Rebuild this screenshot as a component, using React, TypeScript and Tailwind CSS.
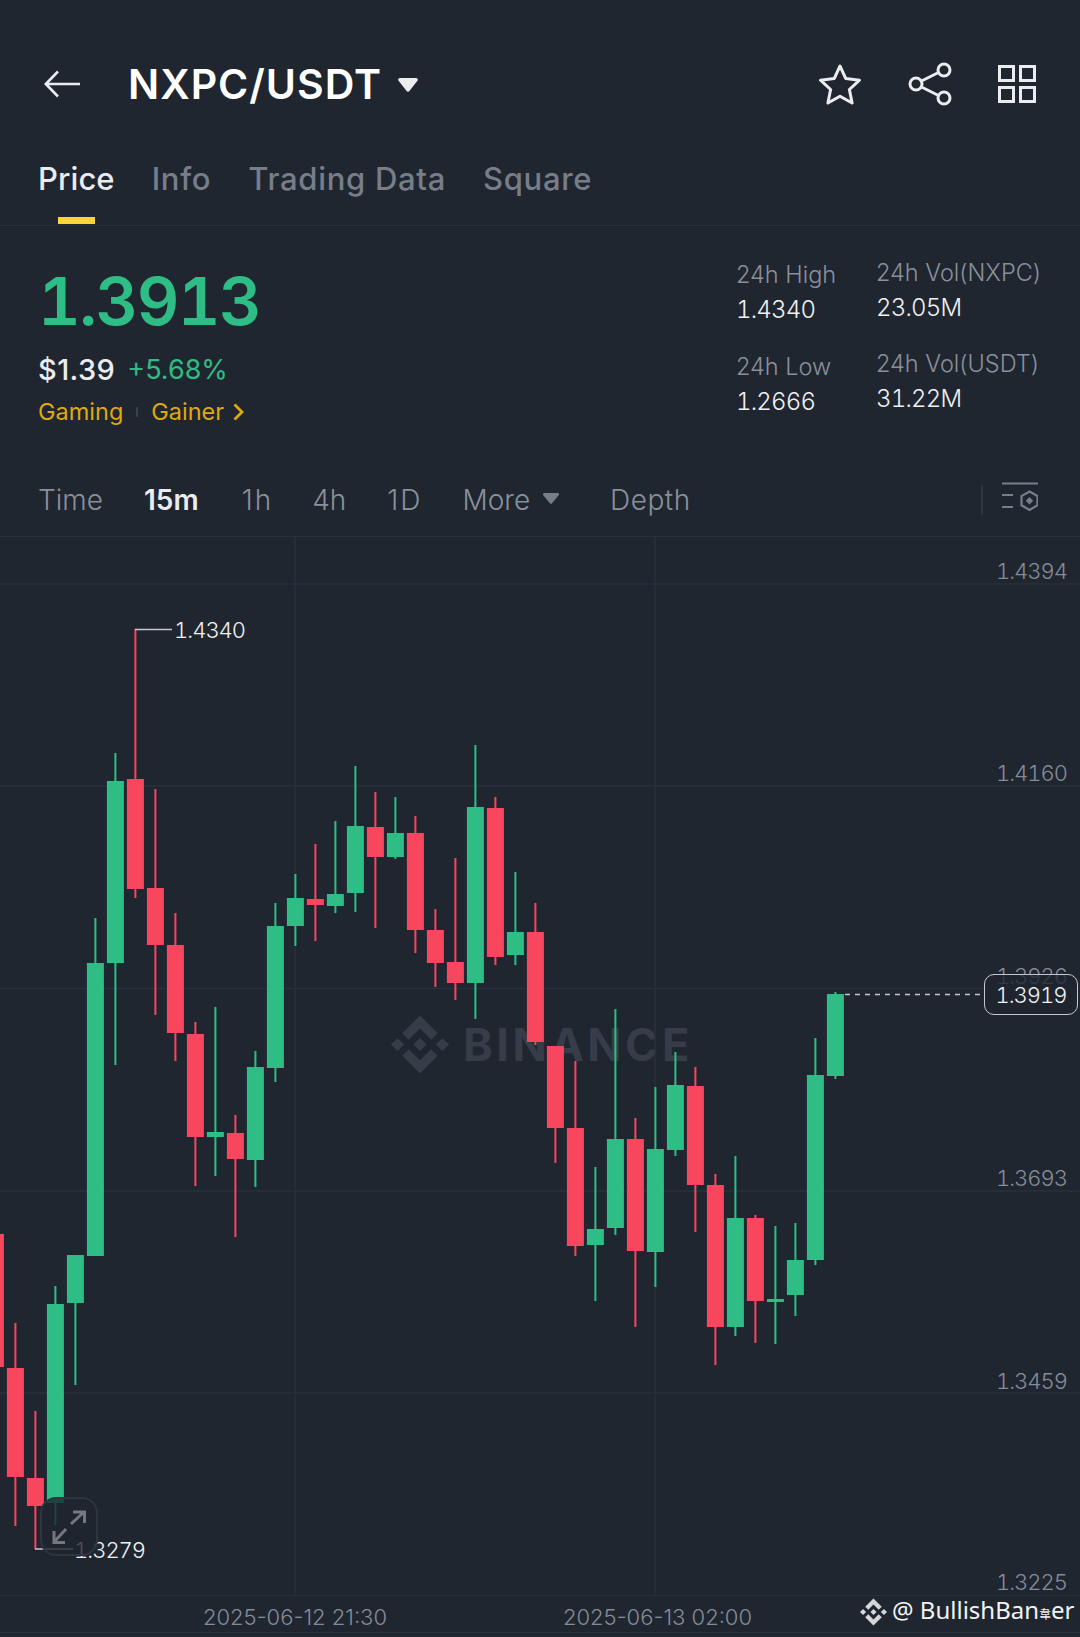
import React from "react";

type C = [number, "g" | "r", number, number, number, number];

const candles: C[] = [
  [-5, "r", 1234, 1234, 1367, 1367],
  [-4, "r", 1323, 1368, 1477, 1526],
  [-3, "r", 1411, 1478, 1506, 1549],
  [-2, "g", 1286, 1304, 1503, 1525],
  [-1, "g", 1255, 1255, 1303, 1385],
  [0, "g", 918, 963, 1256, 1256],
  [1, "g", 753, 781, 963, 1065],
  [2, "r", 629, 779, 889, 898],
  [3, "r", 789, 888, 945, 1015],
  [4, "r", 913, 945, 1033, 1061],
  [5, "r", 1022, 1034, 1137, 1186],
  [6, "g", 1007, 1132, 1137, 1176],
  [7, "r", 1115, 1133, 1159, 1237],
  [8, "g", 1051, 1067, 1160, 1187],
  [9, "g", 903, 926, 1068, 1082],
  [10, "g", 874, 898, 926, 946],
  [11, "r", 844, 899, 905, 941],
  [12, "g", 821, 894, 906, 913],
  [13, "g", 766, 826, 893, 912],
  [14, "r", 792, 827, 857, 928],
  [15, "g", 797, 833, 857, 859],
  [16, "r", 816, 833, 930, 953],
  [17, "r", 909, 930, 963, 987],
  [18, "r", 858, 962, 983, 1000],
  [19, "g", 745, 807, 983, 1019],
  [20, "r", 797, 808, 957, 965],
  [21, "g", 872, 932, 955, 965],
  [22, "r", 903, 932, 1042, 1045],
  [23, "r", 1046, 1046, 1128, 1163],
  [24, "r", 1061, 1128, 1246, 1256],
  [25, "g", 1167, 1229, 1245, 1301],
  [26, "g", 1009, 1139, 1228, 1235],
  [27, "r", 1118, 1139, 1251, 1327],
  [28, "g", 1087, 1149, 1252, 1287],
  [29, "g", 1052, 1085, 1150, 1156],
  [30, "r", 1067, 1086, 1185, 1232],
  [31, "r", 1174, 1185, 1327, 1365],
  [32, "g", 1156, 1218, 1327, 1336],
  [33, "r", 1215, 1218, 1301, 1343],
  [34, "g", 1226, 1299, 1302, 1344],
  [35, "g", 1223, 1260, 1295, 1316],
  [36, "g", 1038, 1075, 1260, 1265],
  [37, "g", 992, 994, 1076, 1079],
];

const binancePath =
  "M16.624 13.9202l2.7175 2.7154-7.353 7.353-7.353-7.352 2.7175-2.7164 4.6355 4.6595 4.6356-4.6595zm4.6366-4.6366L24 12l-2.7154 2.7164L18.5682 12l2.6924-2.7164zm-9.272.001l2.7163 2.6914-2.7164 2.7174v-.001L9.2721 12l2.7164-2.7154zm-9.2722-.001L5.4088 12l-2.6914 2.6924L0 12l2.7164-2.7164zM11.9885.0115l7.353 7.329-2.7174 2.7154-4.6356-4.6356-4.6355 4.6595-2.7174-2.7154 7.353-7.353z";

function Stat({ label, value, className }: { label: string; value: string; className?: string }) {
  return (
    <div className={className}>
      <div className="text-[23.500px] leading-[30px] font-light text-[#8A909B] whitespace-nowrap">{label}</div>
      <div className="mt-[5px] text-[24px] leading-[30px] font-light tracking-[-0.8px] tabular-nums text-[#F0F1F3] whitespace-nowrap">{value}</div>
    </div>
  );
}

function PriceLabel({ top, children }: { top: number; children: string }) {
  return (
    <div className="absolute right-[13px] text-[22px] leading-[28px] font-light tracking-[-1px] tabular-nums text-[#858C98]" style={{ top: top - 537 - 14 }}>
      {children}
    </div>
  );
}

export default function App() {
  return (
    <div className="w-[1080px] h-[1637px] overflow-hidden bg-[#1F2630] font-['Inter','Liberation_Sans',sans-serif]">
      {/* Title row */}
      <div className="flex h-[110px] items-center pt-[58px] pr-[44px] pl-[44px]">
        <svg width="37" height="28" viewBox="0 0 37 28" fill="none" stroke="#EAECEF" strokeWidth="2.6">
          <path d="M36 14H2M14 1.5 1.8 14 14 26.5" />
        </svg>
        <div className="ml-[47px] text-[41px] leading-[50px] font-semibold tracking-[1px] text-white">NXPC/USDT</div>
        <svg className="ml-[16px] mt-[2px]" width="20" height="14" viewBox="0 0 20 14">
          <path d="M2 0h16c1.6 0 2.4 1.6 1.4 2.8L11.4 13c-.8 1-2 1-2.8 0L.6 2.8C-.4 1.6.4 0 2 0z" fill="#EAECEF" />
        </svg>
        <div className="ml-auto flex items-center gap-[46px]">
          <svg width="44" height="42" viewBox="0 0 44 42" fill="none" stroke="#EAECEF" strokeWidth="3" strokeLinejoin="round">
            <path d="M22 3l5.8 12.6 13.7 1.6-10.1 9.3 2.7 13.5L22 33.2 9.900 40l2.700-13.500L2.500 17.200l13.700-1.600z" />
          </svg>
          <svg width="44" height="44" viewBox="0 0 44 44" fill="none" stroke="#EAECEF" strokeWidth="3">
            <circle cx="36" cy="8" r="6" />
            <circle cx="36" cy="36" r="6" />
            <circle cx="8" cy="22" r="6" />
            <path d="M13.500 19l17-8.500M13.500 25l17 8.500" />
          </svg>
          <svg width="38" height="38" viewBox="0 0 38 38" fill="none" stroke="#EAECEF" strokeWidth="3">
            <rect x="1.500" y="1.500" width="14" height="14" />
            <rect x="22.500" y="1.500" width="14" height="14" />
            <rect x="1.500" y="22.500" width="14" height="14" />
            <rect x="22.500" y="22.500" width="14" height="14" />
          </svg>
        </div>
      </div>

      {/* Tabs */}
      <div className="flex h-[116px] gap-[37px] border-b border-[#2A313C] pt-[49px] pl-[38px] text-[31px] leading-[40px] font-medium tracking-[0.7px] text-[#777E8A]">
        <div className="relative tracking-[0.1px] text-[#EAECEF]">
          Price
          <div className="absolute top-[58px] left-[19.500px] h-[7px] w-[37px] bg-[#FCD535]" />
        </div>
        <div>Info</div>
        <div>Trading Data</div>
        <div>Square</div>
      </div>

      {/* Stats */}
      <div className="flex h-[236px]">
        <div className="w-[736px] pt-[42px] pl-[38px]">
          <div className="text-[66px] leading-[66px] font-semibold tracking-[-1.500px] tabular-nums text-[#2EBD85]">1.3913</div>
          <div className="mt-[18px] flex items-center leading-[36px]">
            <span className="text-[29px] font-medium tracking-[0.4px] text-[#EAECEF]">$1.39</span>
            <span className="ml-[12px] text-[27px] text-[#2EBD85]">+5.68%</span>
          </div>
          <div className="mt-[9px] flex items-center text-[23.500px] leading-[30px] text-[#DFA90E]">
            <span>Gaming</span>
            <span className="mx-[13px] h-[10px] w-[2px] bg-[#3A414C]" />
            <span>Gainer</span>
            <svg className="ml-[9px]" width="11" height="18" viewBox="0 0 11 18" fill="none" stroke="#DFA90E" strokeWidth="2.800">
              <path d="M1.500 1.500 9 9l-7.500 7.500" />
            </svg>
          </div>
        </div>
        <div className="w-[140px] pt-[34px]">
          <Stat label="24h High" value="1.4340" />
          <Stat label="24h Low" value="1.2666" className="mt-[27px]" />
        </div>
        <div className="pt-[32px]">
          <Stat label="24h Vol(NXPC)" value="23.05M" />
          <Stat label="24h Vol(USDT)" value="31.22M" className="mt-[26px]" />
        </div>
      </div>

      {/* Interval row */}
      <div className="flex h-[75px] items-center border-b border-[#2A313C] pt-[2px] pr-[42px] pl-[38px] text-[28px] leading-[36px] font-light text-[#8A909B]">
        <span>Time</span>
        <span className="ml-[41px] font-semibold text-[#EAECEF]">15m</span>
        <span className="ml-[43px] tracking-[2px]">1h</span>
        <span className="ml-[39px]">4h</span>
        <span className="ml-[41px] tracking-[2px]">1D</span>
        <span className="ml-[40px]">More</span>
        <svg className="ml-[13px] mb-[3px]" width="16" height="11" viewBox="0 0 16 11">
          <path d="M1.500 0h13c1.300 0 2 1.300 1.200 2.300L9 10.300c-.6.700-1.500.700-2.100 0L.3 2.300C-.5 1.300.2 0 1.500 0z" fill="#777E8A" />
        </svg>
        <span className="ml-[51px] tracking-[0.5px]">Depth</span>
        <span className="ml-auto h-[30px] w-[2px] bg-[#2F3642]" />
        <svg className="ml-[19px] mb-[4px]" width="36" height="32" viewBox="0 0 36 32" fill="none" stroke="#777E8A" strokeWidth="2.200">
          <path d="M0 1.500h36M0 13h11M0 25h11" />
          <path d="M27.500 9.500l8 4.600v9.200l-8 4.600-8-4.600v-9.200z" />
          <path d="M27.500 15l3.700 3.700-3.700 3.700-3.700-3.700z" fill="#777E8A" stroke="none" />
        </svg>
      </div>

      {/* Chart */}
      <div className="relative h-[1059px] border-b border-[#2A313C]">
        <div className="absolute top-[478px] left-[391px] flex items-center text-[#363D48]">
          <svg width="58" height="59" viewBox="0 0 24 24" fill="currentColor">
            <path d={binancePath} />
          </svg>
          <span className="ml-[14px] text-[45px] leading-[58px] font-bold tracking-[3.500px]">BINANCE</span>
        </div>
        <svg className="absolute inset-0" width="1080" height="1059" viewBox="0 537 1080 1059">
          {[584, 786, 988.500, 1191, 1393].map((y) => (
            <line key={y} x1="0" x2="1080" y1={y} y2={y} stroke="#2A313C" strokeWidth="1.500" />
          ))}
          {[295, 655].map((x) => (
            <line key={x} x1={x} x2={x} y1="537" y2="1596" stroke="#2A313C" strokeWidth="1.500" />
          ))}
          {candles.map(([k, c, wt, bt, bb, wb]) => {
            const x = 95.400 + 20 * k;
            const col = c === "g" ? "#2EBD85" : "#F8465F";
            return (
              <g key={k} fill={col}>
                <rect x={x - 1} y={wt} width="2" height={wb - wt} />
                <rect x={x - 8.500} y={bt} width="17" height={bb - bt} />
              </g>
            );
          })}
          <path d="M135 629.500H172" stroke="#C4C8CE" strokeWidth="1.500" />
          <path d="M35 1549H73" stroke="#C4C8CE" strokeWidth="1.500" />
          <path d="M845 994.500H981" stroke="#C4C8CE" strokeWidth="1.500" strokeDasharray="5 5" />
        </svg>

        <div className="absolute top-[79px] left-[174px] text-[22px] leading-[28px] font-light tracking-[-1px] tabular-nums text-[#F0F1F3]">1.4340</div>
        <div className="absolute top-[999px] left-[74px] text-[22px] leading-[28px] font-light tracking-[-1px] tabular-nums text-[#F0F1F3]">1.3279</div>

        <PriceLabel top={571}>1.4394</PriceLabel>
        <PriceLabel top={773}>1.4160</PriceLabel>
        <PriceLabel top={976}>1.3926</PriceLabel>
        <PriceLabel top={1178}>1.3693</PriceLabel>
        <PriceLabel top={1381}>1.3459</PriceLabel>
        <PriceLabel top={1582}>1.3225</PriceLabel>

        <div className="absolute top-[437px] left-[984px] flex h-[41px] w-[94px] items-center justify-center rounded-[10px] border-[1.500px] border-[#C4C8CE] bg-[#1F2630]/80 pt-[2px] text-[22px] font-light tracking-[-1px] tabular-nums text-[#F0F1F3]">
          1.3919
        </div>

        <div className="absolute top-[960px] left-[40px] flex h-[59px] w-[58px] items-center justify-center rounded-[16px] border-2 border-[#2E3440] bg-[#1F2630]/80">
          <svg width="36" height="36" viewBox="0 0 36 36" fill="none" stroke="#73787F" strokeWidth="3">
            <path d="M20 15 33 3M22 3h11.500v11M15 20 3 33M3 22v11.500h11" />
          </svg>
        </div>
      </div>

      {/* Time axis */}
      <div className="relative h-[37px] border-b border-[#2A313C] text-[22px] leading-[28px] font-light text-[#858C98]">
        <div className="absolute top-[7px] left-[203px] whitespace-nowrap">2025-06-12 21:30</div>
        <div className="absolute top-[7px] left-[563px] whitespace-nowrap">2025-06-13 02:00</div>
        <div className="absolute top-[1px] left-[860px] flex h-[30px] items-center whitespace-nowrap text-[#F2F3F5]">
          <svg width="27" height="28" viewBox="0 0 24 24" fill="#D5D7DB">
            <path d={binancePath} />
          </svg>
          <span className="ml-[5px] font-['Noto_Sans','Noto_Sans_CJK_SC',sans-serif] text-[24px] leading-[30px] font-normal">
            @ BullishBan<span className="text-[12px]">韋</span>er
          </span>
        </div>
      </div>
    </div>
  );
}
